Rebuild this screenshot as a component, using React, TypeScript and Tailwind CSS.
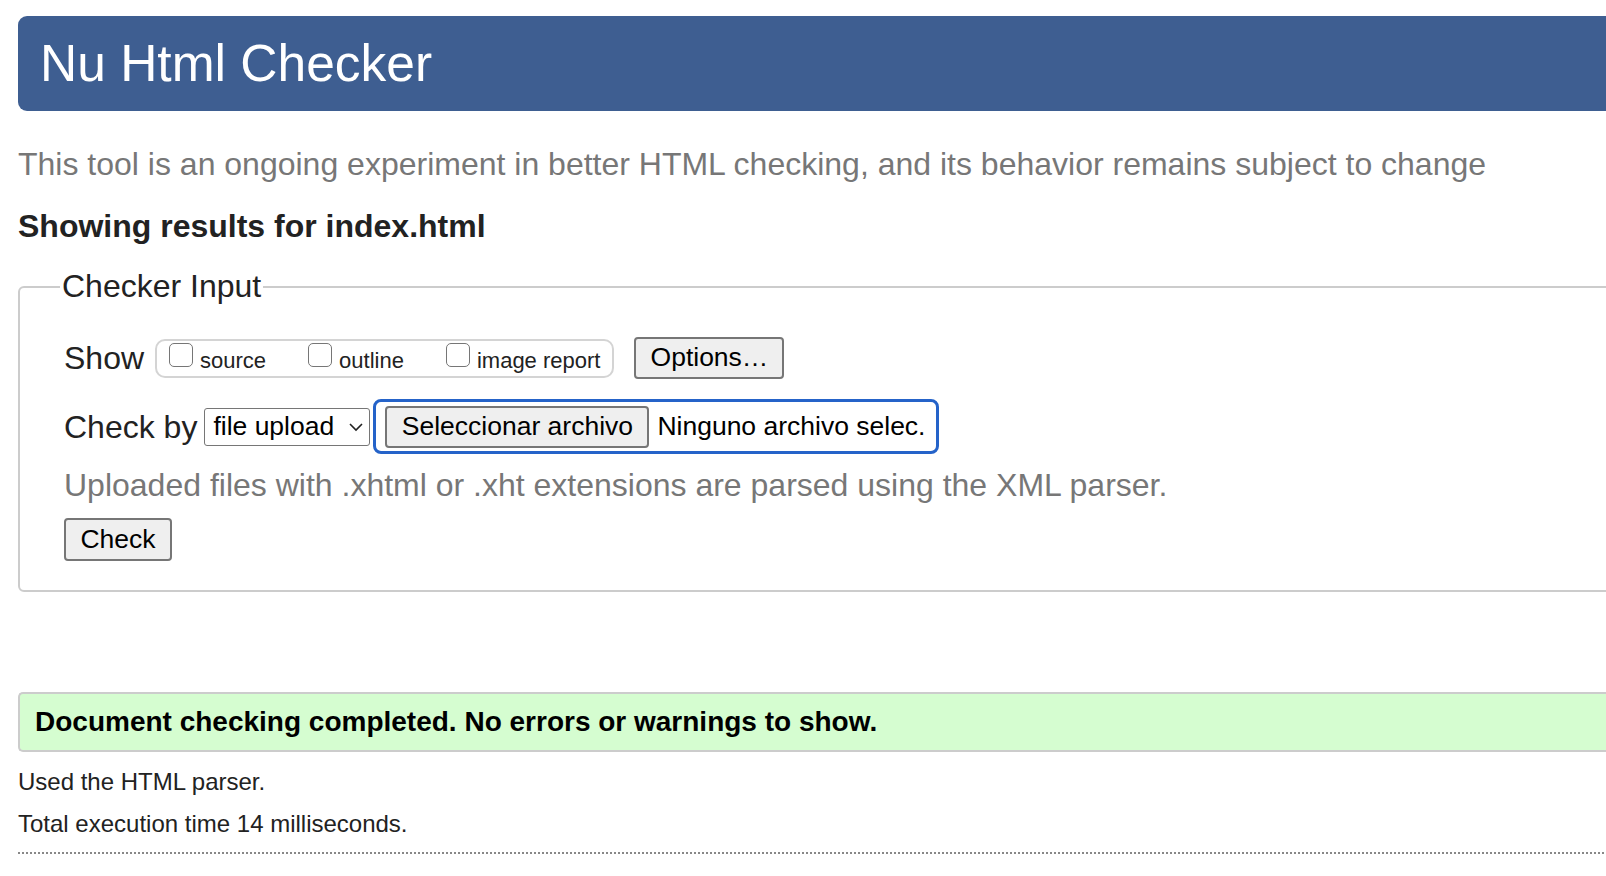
import React from "react";

const font = { fontFamily: '"Liberation Sans", Arial, sans-serif' };

function Box({ label }: { label: string }) {
  return (
    <span className="flex items-start">
      <span className="mt-[1px] block h-[24px] w-[24px] rounded-[5px] border-[1.5px] border-[#767676] bg-white" />
      <span className="ml-[7px] mt-[7px] text-[22px] leading-[24px] text-[#222]">{label}</span>
    </span>
  );
}

export default function App() {
  return (
    <div className="w-full overflow-hidden bg-white text-[#222]" style={font}>
      <div className="w-[1700px] pl-[18px] pt-[16px]">
        <header className="flex h-[95px] items-center rounded-l-[9px] bg-[#3e5e91] pl-[22px]">
          <h1 className="text-[51.5px] leading-none text-white">Nu Html Checker</h1>
        </header>

        <p className="mt-[36px] text-[32px] leading-[35px] text-[#777]">
          This tool is an ongoing experiment in better HTML checking, and its behavior remains subject to change
        </p>

        <h2 className="mt-[27px] text-[32px] font-bold leading-[35px] text-[#222]">
          Showing results for index.html
        </h2>

        <fieldset className="mt-[25px] w-[1640px] rounded-[6px] border-2 border-[#cccccc] pb-[29px] pl-[44px]">
          <legend className="-ml-[4px] px-[2px] text-[32px] leading-[35px] text-[#222]">Checker Input</legend>

          <div className="mt-[33px] flex items-center">
            <span className="text-[32px] leading-[36px]">Show</span>
            <div className="ml-[11px] flex h-[39px] items-start gap-[42px] rounded-[10px] border-2 border-[#d4d4d4] pl-[12px] pr-[12px] pt-[1px]">
              <Box label="source" />
              <Box label="outline" />
              <Box label="image report" />
            </div>
            <button className="ml-[20px] flex h-[42px] w-[150px] items-center justify-center rounded-[4px] border-2 border-[#767676] bg-[#efefef] text-[26.5px] text-black">
              Options…
            </button>
          </div>

          <div className="mt-[20px] flex items-center">
            <span className="text-[32px] leading-[36px]">Check by</span>
            <div className="ml-[7px] flex h-[38px] w-[166px] items-center justify-between rounded-[3px] border border-[#767676] bg-white pl-[8px] pr-[5px] text-[26.5px] text-black">
              <span>file upload</span>
              <svg width="16" height="10" viewBox="0 0 16 10" fill="none" stroke="#222" strokeWidth="1.6">
                <path d="M2 2l6 6 6-6" />
              </svg>
            </div>
            <div className="ml-[3px] flex h-[55px] w-[566px] items-center rounded-[8px] border-[3px] border-[#2563c9] pl-[9px]">
              <button className="flex h-[42px] w-[264px] items-center justify-center rounded-[4px] border-2 border-[#767676] bg-[#efefef] text-[26.5px] text-black">
                Seleccionar archivo
              </button>
              <span className="ml-[8px] text-[26.5px] text-black">Ninguno archivo selec.</span>
            </div>
          </div>

          <p className="mt-[12px] text-[32px] leading-[38px] text-[#777]">
            Uploaded files with .xhtml or .xht extensions are parsed using the XML parser.
          </p>

          <button className="mt-[14px] flex h-[43px] w-[108px] items-center justify-center rounded-[4px] border-2 border-[#767676] bg-[#efefef] text-[26.5px] text-black">
            Check
          </button>
        </fieldset>

        <div className="mt-[100px] flex h-[60px] items-center rounded-l-[5px] border-y-2 border-l-2 border-[#cccccc] bg-[#d5fdd0] pl-[15px]">
          <span className="text-[28px] font-bold text-black">Document checking completed. No errors or warnings to show.</span>
        </div>

        <p className="mt-[16px] text-[24px] leading-[28px] text-[#222]">Used the HTML parser.</p>
        <p className="mt-[14px] text-[24px] leading-[28px] text-[#222]">Total execution time 14 milliseconds.</p>

        <div className="mt-[14px] border-t-2 border-dotted border-[#888]" />
      </div>
    </div>
  );
}
